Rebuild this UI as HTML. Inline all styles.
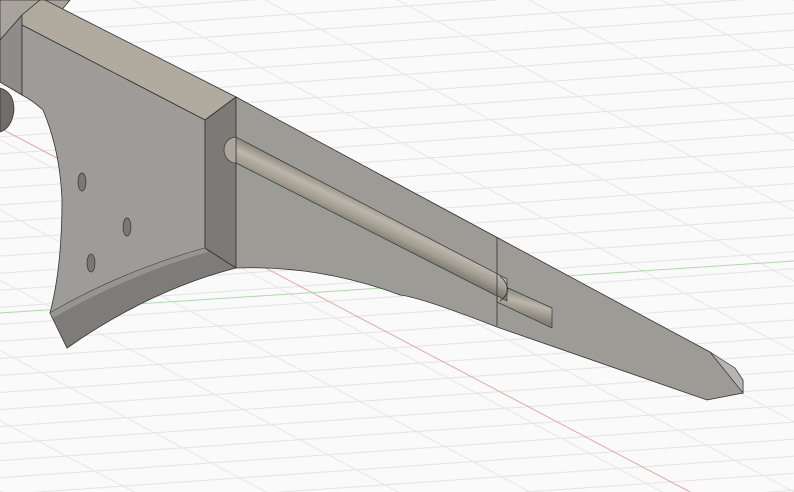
<!DOCTYPE html>
<html><head><style>html,body{margin:0;padding:0;background:#fff;}svg{display:block}</style></head>
<body>
<svg width="794" height="492" viewBox="0 0 794 492" xmlns="http://www.w3.org/2000/svg">
<defs>
<pattern id="h" width="800" height="17" patternUnits="userSpaceOnUse" patternTransform="rotate(-4)">
<rect x="0" y="0" width="800" height="1" fill="#e3e3e3"/></pattern>
<pattern id="d" width="62" height="800" patternUnits="userSpaceOnUse" patternTransform="rotate(-62)">
<rect x="0" y="0" width="1" height="800" fill="#e6e6e6"/></pattern>
<linearGradient id="rod" gradientUnits="userSpaceOnUse" x1="377" y1="206" x2="365" y2="231">
<stop offset="0" stop-color="#8f8a80"/><stop offset="0.35" stop-color="#bdb6aa"/><stop offset="0.7" stop-color="#a39d92"/><stop offset="1" stop-color="#7f7b73"/></linearGradient>
<linearGradient id="slot" gradientUnits="userSpaceOnUse" x1="528" y1="294" x2="522" y2="316">
<stop offset="0" stop-color="#8f8a80"/><stop offset="0.4" stop-color="#bdb6aa"/><stop offset="1" stop-color="#837f77"/></linearGradient>
</defs>
<rect width="794" height="492" fill="#fafafa"/>
<rect width="794" height="492" fill="url(#h)"/>
<rect width="794" height="492" fill="url(#d)"/>
<line x1="0" y1="128" x2="690" y2="492" stroke="#e2a8a8" stroke-width="1"/>
<line x1="0" y1="313" x2="794" y2="261" stroke="#a8dca8" stroke-width="1"/>
<path d="M0 88 Q14 92 14 110 Q12 128 0 132 Z" fill="#6f6d69" stroke="#333" stroke-width="0.8"/>
<path d="M0 0 L22 0 L22 95 L0 82 Z" fill="#8e8c88" stroke="#333" stroke-width="0.8"/>
<path d="M0 0 L70 0 L60 12 L40 5 L22 15 L0 40 Z" fill="#a9a49b" stroke="#333" stroke-width="0.8"/>
<path d="M22 15 L40 0 L45 0 L236 97 L205 120 L22 25 Z" fill="#b0aa9f" stroke="#333" stroke-width="0.8"/>
<line x1="24" y1="28" x2="204" y2="122" stroke="#555" stroke-width="1"/>
<path d="M22 25 L205 120 L205 248 Q120 272 50 313 Q62 267 62 200 Q60 150 43 110 Q32 100 22 95 Z" fill="#9d9c98" stroke="#333" stroke-width="0.8"/>
<ellipse cx="82" cy="182" rx="4" ry="9" fill="#7a7873" stroke="#333" stroke-width="0.7"/>
<ellipse cx="127" cy="227" rx="4" ry="9" fill="#7a7873" stroke="#333" stroke-width="0.7"/>
<ellipse cx="91" cy="263" rx="4" ry="9" fill="#7a7873" stroke="#333" stroke-width="0.7"/>
<path d="M50 313 Q120 272 205 248 L236 268 Q150 290 67 348 Z" fill="#7d7c78" stroke="#333" stroke-width="0.8"/>
<path d="M50 313 Q120 272 205 248 L208 252 Q125 276 53 318 Z" fill="#959490"/>
<path d="M205 120 L236 97 L236 268 L205 248 Z" fill="#7b7a76" stroke="#333" stroke-width="0.8"/>
<path d="M236 97 L710 352 L743 380 L743 393 L707 400 L497 327 Q420 297 400 295 Q320 265 236 268 Z" fill="#9c9b96" stroke="#333" stroke-width="0.8"/>
<path d="M710 352 L735 368 L743 380 L743 393 Z" fill="#b7b5b0" stroke="#333" stroke-width="0.7"/>
<path d="M497 283 L552 308 L552 328 L497 302 Z" fill="url(#slot)" stroke="#333" stroke-width="0.7"/>
<path d="M236 137 L507 279 L507 301 L236 163 Z" fill="url(#rod)" stroke="#333" stroke-width="0.7"/>
<path d="M236 137 A12 13 0 0 0 236 163 Z" fill="#aba59b" stroke="#333" stroke-width="0.7"/>
<path d="M500 276 Q515 290 500 301" fill="none" stroke="#333" stroke-width="0.8"/>
<line x1="497" y1="237" x2="497" y2="326" stroke="#333" stroke-width="0.8"/>
</svg>
</body></html>
